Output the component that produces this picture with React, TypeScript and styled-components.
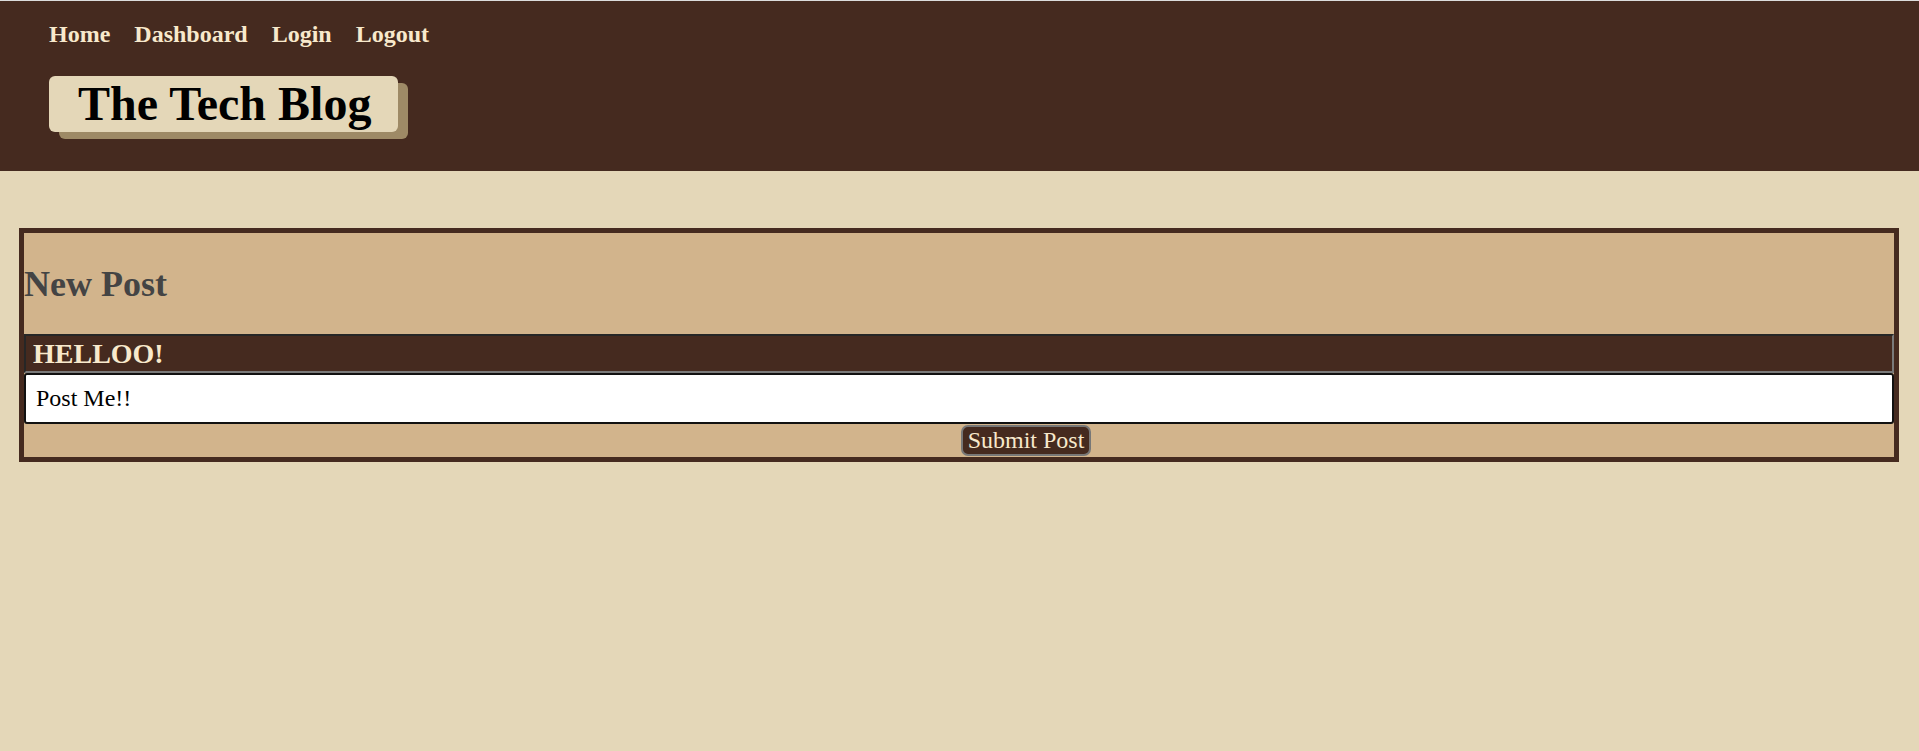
import React from "react"
import styled, { createGlobalStyle } from "styled-components"

const GlobalStyle = createGlobalStyle`
  html, body {
    margin: 0;
    padding: 0;
    background: #e4d7b8;
    font-family: "Liberation Serif", "Times New Roman", serif;
  }
`

const Header = styled.header`
  background: #452a1f;
  border-top: 1px solid #dcdcdc;
  padding: 20px 0 39px 49px;
`

const Nav = styled.nav`
  display: flex;
  gap: 24px;
  margin-bottom: 28px;

  a {
    color: #f8e9cc;
    font-size: 24px;
    font-weight: bold;
    text-decoration: none;
  }
`

const TitleBox = styled.h1`
  display: inline-block;
  margin: 0;
  padding: 0 27px 1px 29px;
  background: #e4d7b8;
  color: #000;
  font-size: 48px;
  font-weight: bold;
  border-radius: 6px;
  box-shadow: 10px 7px 0 #9e8a66;
`

const Panel = styled.form`
  margin: 57px 20px 0 19px;
  border: 5px solid #452a1f;
  background: #d2b48c;
`

const PanelTitle = styled.h2`
  margin: 30px 0 29px;
  font-size: 36px;
  font-weight: bold;
  color: #444;
`

const TitleInput = styled.input`
  display: block;
  width: 100%;
  height: 39px;
  box-sizing: border-box;
  margin: 0;
  padding: 0 7px;
  background: #452a1f;
  color: #f8e9cc;
  font-family: inherit;
  font-size: 28px;
  font-weight: bold;
  border: 2px solid;
  border-color: #262626 #7a7a7a #7a7a7a #262626;
  outline: none;
`

const BodyInput = styled.input`
  display: block;
  width: 100%;
  height: 51px;
  box-sizing: border-box;
  margin: 0;
  padding: 0 10px;
  background: #fff;
  color: #000;
  font-family: inherit;
  font-size: 24px;
  border: 2px solid #111;
  border-radius: 3px;
  outline: none;
`

const ButtonRow = styled.div`
  display: flex;
  justify-content: center;
  padding: 1px 0 1px 134px;
`

const SubmitButton = styled.button`
  height: 31px;
  padding: 0 5px;
  background: #452a1f;
  color: #f8e9cc;
  font-family: inherit;
  font-size: 24px;
  border: 2px solid #777;
  border-radius: 7px;
  cursor: pointer;
`

export default function App() {
  return (
    <>
      <GlobalStyle />
      <Header>
        <Nav>
          <a href="#">Home</a>
          <a href="#">Dashboard</a>
          <a href="#">Login</a>
          <a href="#">Logout</a>
        </Nav>
        <TitleBox>The Tech Blog</TitleBox>
      </Header>
      <Panel onSubmit={(e) => e.preventDefault()}>
        <PanelTitle>New Post</PanelTitle>
        <TitleInput defaultValue="HELLOO!" />
        <BodyInput defaultValue="Post Me!!" />
        <ButtonRow>
          <SubmitButton type="submit">Submit Post</SubmitButton>
        </ButtonRow>
      </Panel>
    </>
  )
}
